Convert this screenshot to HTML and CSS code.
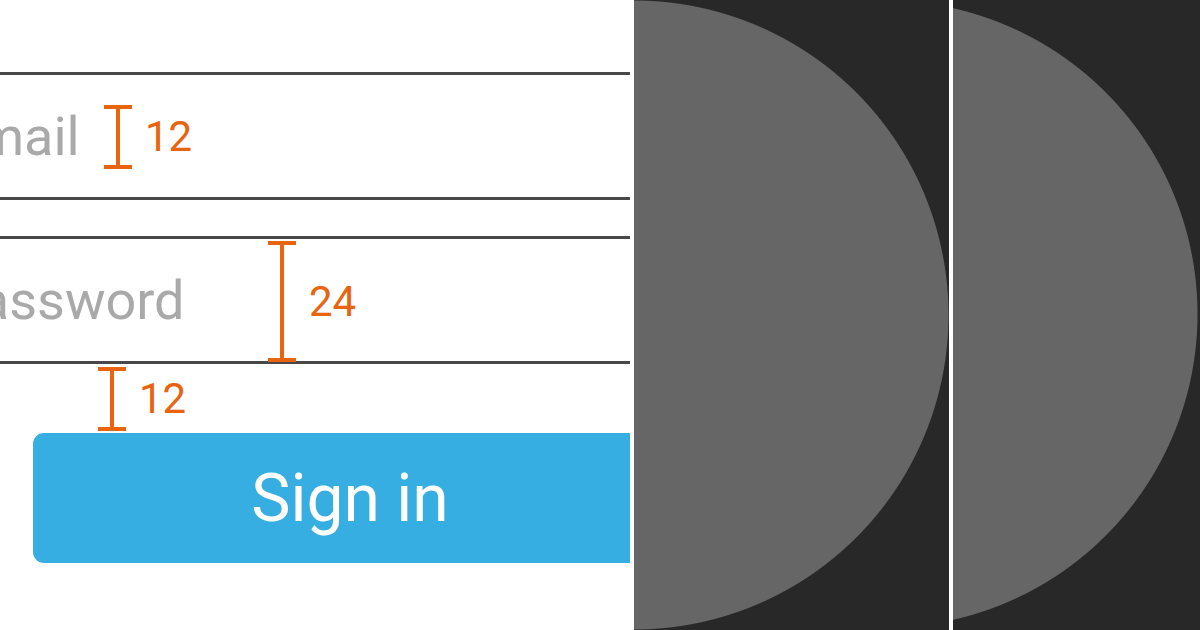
FILE: index.html
```html
<!DOCTYPE html>
<html lang="en">
<head>
    <meta charset="UTF-8">
    <meta name="viewport" content="width=device-width, initial-scale=1.0">
    <title>Sign in spacing</title>
    <link rel="stylesheet" href="styles.css">
</head>
<body>
    <div class="stage">
        <div class="phone">
            <form class="form">
                <div class="field field-email"><span class="hint">Email</span></div>
                <div class="field field-password"><span class="hint">Password</span></div>
                <div class="signIn">Sign in</div>
            </form>
            <div class="mark mark-email"><span class="beam beam-small"></span><span class="num">12</span></div>
            <div class="mark mark-password"><span class="beam beam-big"></span><span class="num">24</span></div>
            <div class="mark mark-gap"><span class="beam beam-small"></span><span class="num">12</span></div>
        </div>
        <div class="panel panel-one"></div>
        <div class="panel panel-two"></div>
    </div>
</body>
</html>
```

FILE: styles.css
```css
body {
    margin: 0;
    font-family: Roboto, "Noto Sans", sans-serif;
    background-color: #ffffff;
}
.stage {
    display: flex;
    gap: 4px;
    width: 1200px;
    height: 630px;
    overflow: hidden;
}
.phone {
    position: relative;
    width: 630px;
    flex: none;
    overflow: hidden;
    background-color: #ffffff;
}
.form {
    margin: 0 0 0 -90px;
    padding-top: 72px;
    width: 900px;
}
.field {
    box-sizing: border-box;
    display: flex;
    align-items: center;
    border: 3px solid #484848;
    padding-left: 33px;
    font-size: 54px;
    color: #a9a9a9;
}
.field-email {
    height: 128px;
    margin-bottom: 36px;
}
.field-password {
    height: 128px;
}
.signIn {
    margin: 69px 0 0 123px;
    width: 634px;
    height: 130px;
    border-radius: 11px;
    background-color: #37aee1;
    color: #ffffff;
    font-size: 66px;
    display: flex;
    align-items: center;
    justify-content: center;
}
.mark {
    position: absolute;
    display: flex;
    align-items: center;
    gap: 13px;
    color: #e8640f;
}
.mark-email {
    left: 104px;
    top: 105px;
}
.mark-password {
    left: 268px;
    top: 241px;
}
.mark-gap {
    left: 98px;
    top: 367px;
}
.beam {
    position: relative;
    box-sizing: border-box;
    width: 28px;
    border-top: 4px solid #e8640f;
    border-bottom: 4px solid #e8640f;
}
.beam::after {
    content: "";
    position: absolute;
    left: 12px;
    top: 0;
    bottom: 0;
    width: 4px;
    background-color: #e8640f;
}
.beam-small {
    height: 64px;
}
.beam-big {
    height: 121px;
}
.num {
    font-size: 42px;
    line-height: 42px;
}
.panel {
    height: 630px;
    background-color: #282828;
}
.panel-one {
    width: 315px;
    flex: none;
    background-image: radial-gradient(circle 315px at 0 315px, #666666 314px, #282828 315px);
}
.panel-two {
    flex: 1;
    background-image: radial-gradient(circle 314px at -69px 314px, #666666 313px, #282828 314px);
}
```
